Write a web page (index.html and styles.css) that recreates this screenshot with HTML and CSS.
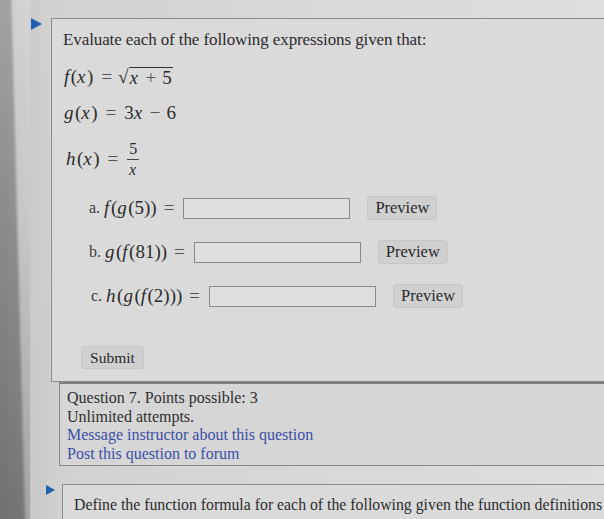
FILE: index.html
```html
<!DOCTYPE html>
<html>
<head>
<meta charset="utf-8">
<link rel="stylesheet" href="styles.css">
</head>
<body>
<div class="page">
  <div class="q-row">
    <span class="tri"></span>
    <div class="qbox">
      <p class="intro">Evaluate each of the following expressions given that:</p>
      <div class="mline m1"><i>f</i>(<i>x</i>)<span class="eq">=</span><span class="rad">√</span><span class="radicand"><i>x</i><span class="op">+</span>5</span></div>
      <div class="mline m2"><i>g</i>(<i>x</i>)<span class="eq">=</span>3<i>x</i><span class="op">−</span>6</div>
      <div class="mline m3"><i>h</i>(<i>x</i>)<span class="eq">=</span><span class="frac"><span class="num">5</span><span class="den"><i>x</i></span></span></div>

      <div class="ans ans-a">
        <span class="lbl">a.</span><span class="mexp"><i>f</i>(<i>g</i>(5))<span class="eq">=</span></span>
        <span class="inp"></span>
        <span class="btn prev">Preview</span>
      </div>
      <div class="ans ans-b">
        <span class="lbl">b.</span><span class="mexp"><i>g</i>(<i>f</i>(81))<span class="eq">=</span></span>
        <span class="inp"></span>
        <span class="btn prev">Preview</span>
      </div>
      <div class="ans ans-c">
        <span class="lbl">c.</span><span class="mexp"><i>h</i>(<i>g</i>(<i>f</i>(2)))<span class="eq">=</span></span>
        <span class="inp"></span>
        <span class="btn prev">Preview</span>
      </div>

      <span class="btn submit">Submit</span>
    </div>
  </div>

  <div class="info">
    <div>Question 7. Points possible: 3</div>
    <div>Unlimited attempts.</div>
    <div class="link">Message instructor about this question</div>
    <div class="link">Post this question to forum</div>
  </div>

  <div class="q-row q2">
    <span class="tri tri2"></span>
    <div class="qbox2">
      <p class="intro2">Define the function formula for each of the following given the function definitions</p>
    </div>
  </div>
</div>
</body>
</html>
```
FILE: styles.css
```css
html, body {
  margin: 0;
  padding: 0;
}
body {
  width: 604px;
  height: 519px;
  overflow: hidden;
  font-family: "Liberation Serif", "Times New Roman", serif;
  color: #2c2c2c;
  background:
    linear-gradient(to bottom, rgba(255,255,255,0.18), rgba(0,0,0,0) 40%, rgba(0,0,0,0.18)) no-repeat 0 0 / 30px 100%,
    linear-gradient(88.5deg, #888 0, #909090 23px, #c6c6c6 27px, #d1d1d1 60px, #d8d8d8 300px, #dedede 100%);
}
.page {
  padding-top: 18px;
}
.q-row {
  display: flex;
  align-items: flex-start;
}
.tri {
  width: 0;
  height: 0;
  margin-left: 31px;
  margin-right: 9px;
  border-top: 6px solid transparent;
  border-bottom: 6px solid transparent;
  border-left: 11px solid #2160ae;
  flex: none;
}
.qbox {
  flex: none;
  width: 600px;
  height: 364px;
  border: 1px solid #8c8c8c;
  border-right: none;
  background: #dadada;
  padding-left: 11px;
  box-sizing: border-box;
  display: flex;
  flex-direction: column;
  align-items: flex-start;
}
.intro {
  margin: 11px 0 0 0;
  font-size: 17px;
  line-height: 20px;
  letter-spacing: -0.1px;
}
.mline {
  font-size: 19px;
  line-height: 20px;
  display: flex;
  align-items: center;
  margin-left: 1px;
}
.mline i, .mexp i {
  font-family: "Liberation Serif", serif;
  font-style: italic;
  padding-right: 1.5px;
}
.m1 { margin-top: 17px; }
.m2 { margin-top: 16px; }
.m3 { margin-top: 14px; height: 44px; margin-left: 3px; }
.eq {
  margin: 0 8px;
  color: #555;
}
.op {
  margin: 0 6px;
  color: #555;
}
.rad {
  font-size: 19px;
  margin-left: -2px;
}
.radicand {
  border-top: 1px solid #333;
  padding: 0 1px;
  line-height: 19px;
}
.frac {
  display: inline-flex;
  flex-direction: column;
  align-items: center;
  font-size: 16px;
  line-height: 20px;
  margin-left: 1px;
}
.num {
  border-bottom: 1px solid #444;
  padding: 0 2px;
}
.ans {
  display: flex;
  align-items: center;
  height: 24px;
  margin-left: 26px;
  font-size: 19px;
}
.ans-a { margin-top: 15px; }
.ans-b { margin-top: 20px; }
.ans-c { margin-top: 20px; margin-left: 28px; }
.lbl {
  font-size: 16px;
  color: #3a3a3a;
  margin-right: 4px;
}
.mexp {
  display: flex;
  align-items: center;
}
.mexp .eq {
  margin: 0 0 0 7px;
}
.inp {
  display: block;
  width: 165px;
  height: 19px;
  border: 1px solid #8a8a8a;
  background: #dfdfdf;
  margin-left: 9px;
}
.btn {
  display: inline-flex;
  align-items: center;
  justify-content: center;
  box-sizing: border-box;
  background: #d0d0d0;
  border: 1px solid #c6c6c6;
  border-radius: 3px;
  color: #2a2a2a;
  font-size: 16.5px;
}
.prev {
  width: 70px;
  height: 24px;
  margin-left: 17px;
}
.submit {
  width: 63px;
  height: 23px;
  margin-top: 38px;
  margin-left: 18px;
  font-size: 15.5px;
}
.info {
  margin-left: 59px;
  width: 600px;
  height: 84px;
  box-sizing: border-box;
  border: 1px solid #888;
  border-right: none;
  border-top: 2px solid #7e7e7e;
  background: #d6d6d6;
  padding: 5px 0 0 7px;
  font-size: 16px;
  line-height: 18.5px;
  color: #2e2e2e;
}
.link {
  color: #3c4fa6;
}
.q2 {
  margin-top: 18px;
}
.tri2 {
  margin-left: 46px;
  margin-right: 7px;
  margin-top: 1px;
  border-top-width: 5px;
  border-bottom-width: 5px;
  border-left-width: 9px;
}
.qbox2 {
  flex: none;
  width: 600px;
  height: 60px;
  border: 1px solid #8c8c8c;
  border-right: none;
  background: #dadada;
  padding-left: 11px;
  box-sizing: border-box;
}
.intro2 {
  margin: 10px 0 0 0;
  font-size: 15.8px;
  line-height: 20px;
  white-space: nowrap;
}
```
